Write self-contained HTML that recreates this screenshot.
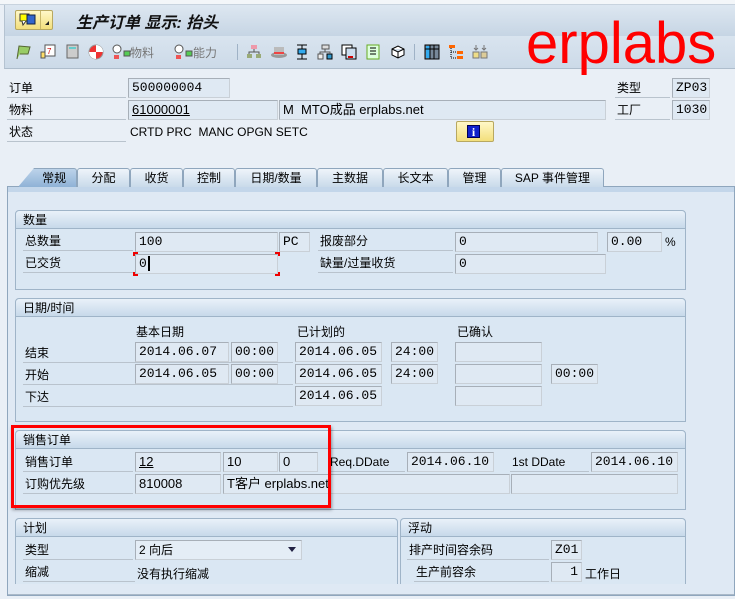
<!DOCTYPE html>
<html><head><meta charset="utf-8"><style>
*{margin:0;padding:0;box-sizing:border-box}
body{width:735px;height:599px;overflow:hidden;background:#e9eff6;font-family:"Liberation Sans","Noto Sans CJK SC",sans-serif;font-size:12px;color:#000;position:relative}
.a{position:absolute;white-space:nowrap}
.f{position:absolute;height:20px;border:1px solid #a7afb8;border-right-color:#c9d0d7;border-bottom-color:#c9d0d7;background:#dfe9f3;font-family:"Liberation Mono","Noto Sans CJK SC",monospace;font-size:13px;line-height:18px;padding-left:3px;white-space:nowrap;overflow:hidden}
.s{font-family:"Liberation Sans","Noto Sans CJK SC",sans-serif;font-size:12px}
.l{position:absolute;height:20px;line-height:20px;border-bottom:1px solid #b9c3cd;padding-left:2px;white-space:nowrap}
.g{position:absolute;border:1px solid #9fb4c8;border-radius:4px 4px 0 0;background:#dae7f3}
.gh{height:18px;background:linear-gradient(#e9f1f9,#c7d9ea);border-bottom:1px solid #9fb4c8;padding-left:7px;line-height:18px;border-radius:4px 4px 0 0}
.tab{position:absolute;top:168px;height:19px;border:1px solid #8fa6bd;border-bottom:none;border-radius:3px 3px 0 0;background:linear-gradient(#eef4fa,#c9daea);text-align:center;line-height:18px}
.ic{position:absolute;top:44px}
.rc{position:absolute;width:5px;height:4px;border-color:#e00;border-style:solid;border-width:0}
</style></head><body>
<div class="a" style="left:0;top:0;width:735px;height:5px;background:#f3f6f9;border-bottom:1px solid #c8d3de"></div>
<div class="a" style="left:4px;top:5px;width:731px;height:31px;background:linear-gradient(#dde7f1,#c6d5e4);border-left:1px solid #b5c3d1"></div>
<div class="a" style="left:15px;top:10px;width:38px;height:20px;background:linear-gradient(#fff8c8,#f3df7c);border:1px solid #b8a860;border-radius:2px"></div>
<div class="a" style="left:40px;top:11px;width:1px;height:18px;background:#c9b86a"></div>
<svg class="a" style="left:19px;top:13px" width="18" height="14"><rect x="1" y="1" width="9" height="7" fill="#ff0" stroke="#333"/><rect x="8" y="2" width="8" height="9" fill="#36c" stroke="#124"/><path d="M3 8 L4 12 L7 8" fill="#fff" stroke="#333"/></svg>
<div class="a" style="left:45px;top:21px;width:4px;height:4px;background:#222;clip-path:polygon(100% 0,100% 100%,0 100%)"></div>
<div class="a" style="left:76px;top:9px;font-size:16px;font-weight:bold;font-style:italic;color:#111">生产订单 显示: 抬头</div>
<div class="a" style="left:4px;top:36px;width:731px;height:33px;background:linear-gradient(#d9e4ef,#ccdae8);border-left:1px solid #b5c3d1;border-bottom:1px solid #aebdcc"></div>
<svg class="ic" style="left:14px" width="20" height="16"><path d="M3 15 L5 2 L16 3 L14 10 L6 10" fill="#9c6" stroke="#563"/></svg>
<svg class="ic" style="left:40px" width="16" height="16"><rect x="5" y="1" width="10" height="11" fill="#fff" stroke="#555"/><text x="7" y="10" font-size="8" fill="#c00">7</text><rect x="1" y="8" width="4" height="6" fill="#fd6" stroke="#555"/></svg>
<svg class="ic" style="left:66px" width="14" height="16"><rect x="1" y="1" width="11" height="13" fill="#ccc" stroke="#666"/><rect x="3" y="3" width="7" height="2" fill="#6cc"/></svg>
<svg class="ic" style="left:88px" width="16" height="16"><circle cx="8" cy="8" r="7" fill="#e33" stroke="#999"/><path d="M8 1 A7 7 0 0 1 15 8 L8 8Z M8 8 L8 15 A7 7 0 0 1 1 8Z" fill="#fff"/></svg>
<svg class="ic" style="left:112px" width="20" height="16"><circle cx="5" cy="5" r="4" fill="#fff" stroke="#555"/><rect x="2" y="11" width="5" height="4" fill="#e55"/><rect x="12" y="7" width="6" height="5" fill="#5c5" stroke="#555"/></svg>
<div class="a" style="left:130px;top:44px;color:#777">物料</div>
<svg class="ic" style="left:174px" width="20" height="16"><circle cx="5" cy="5" r="4" fill="#fff" stroke="#555"/><rect x="2" y="11" width="5" height="4" fill="#e55"/><rect x="12" y="7" width="6" height="5" fill="#5c5" stroke="#555"/></svg>
<div class="a" style="left:193px;top:44px;color:#777">能力</div>
<div class="a" style="left:237px;top:44px;width:1px;height:16px;background:#9fb2c6"></div>
<svg class="ic" style="left:246px" width="16" height="16"><rect x="5" y="1" width="6" height="4" fill="#e9a"/><rect x="1" y="10" width="5" height="4" fill="#9a7"/><rect x="10" y="10" width="5" height="4" fill="#9a7"/><path d="M8 5V8H3V10M8 8H13V10" stroke="#555" fill="none"/></svg>
<svg class="ic" style="left:270px" width="18" height="16"><ellipse cx="9" cy="11" rx="8" ry="3" fill="#999"/><rect x="4" y="3" width="10" height="8" fill="#bbb"/><rect x="4" y="8" width="10" height="2" fill="#e44"/></svg>
<svg class="ic" style="left:296px" width="12" height="16"><path d="M1 1H11M6 1V15M1 15H11" stroke="#000"/><rect x="2" y="5" width="8" height="5" fill="#3ae" stroke="#000"/></svg>
<svg class="ic" style="left:317px" width="16" height="16"><rect x="5" y="1" width="7" height="4" fill="#ddd" stroke="#555"/><rect x="1" y="10" width="5" height="5" fill="#eee" stroke="#555"/><rect x="10" y="10" width="5" height="5" fill="#39c" stroke="#000"/><path d="M8 5V8H3V10M8 8H13V10" stroke="#555" fill="none"/></svg>
<svg class="ic" style="left:341px" width="16" height="16"><rect x="1" y="1" width="10" height="10" fill="#fff" stroke="#000"/><rect x="5" y="4" width="10" height="11" fill="#cde" stroke="#000"/><rect x="7" y="12" width="5" height="2" fill="#c00"/></svg>
<svg class="ic" style="left:366px" width="14" height="16"><rect x="1" y="1" width="12" height="14" fill="#dfd" stroke="#6a2"/><path d="M4 4H10M4 7H10M4 10H10" stroke="#000"/></svg>
<svg class="ic" style="left:390px" width="16" height="16"><path d="M2 5L8 2L14 5V11L8 14L2 11Z M2 5L8 8L14 5M8 8V14" fill="#fff" stroke="#000"/></svg>
<div class="a" style="left:414px;top:44px;width:1px;height:16px;background:#9fb2c6"></div>
<svg class="ic" style="left:424px" width="16" height="16"><rect x="1" y="1" width="14" height="14" fill="#789" stroke="#000"/><rect x="2" y="2" width="4" height="12" fill="#3ae"/><path d="M6 1V15M10 1V15M1 5H15" stroke="#000"/></svg>
<svg class="ic" style="left:448px" width="16" height="16"><rect x="1" y="1" width="6" height="3" fill="#f60"/><rect x="9" y="7" width="6" height="3" fill="#f60"/><rect x="9" y="12" width="6" height="3" fill="#f60"/><path d="M3 4V14H9M3 8H9" stroke="#000" stroke-dasharray="1 1" fill="none"/></svg>
<svg class="ic" style="left:471px" width="18" height="16"><rect x="2" y="8" width="6" height="6" fill="#ed8" stroke="#777"/><rect x="10" y="8" width="6" height="6" fill="#dc9" stroke="#777"/><path d="M5 1V6M3 4L5 6L7 4M13 1V6M11 4L13 6L15 4" stroke="#777" fill="none"/></svg>
<div class="a" style="left:526px;top:15px;font-size:58px;color:#f00;font-family:'Liberation Sans',sans-serif;line-height:1">erplabs</div>
<div class="l" style="left:7px;top:78px;width:119px">订单</div>
<div class="f" style="left:128px;top:78px;width:102px">500000004</div>
<div class="l" style="left:7px;top:100px;width:119px">物料</div>
<div class="f s" style="left:128px;top:100px;width:150px;text-decoration:underline;font-size:13px">61000001</div>
<div class="f s" style="left:279px;top:100px;width:327px;font-size:13px">M&nbsp; MTO成品 erplabs.net</div>
<div class="l" style="left:7px;top:122px;width:119px">状态</div>
<div class="a" style="left:130px;top:125px">CRTD PRC&nbsp; MANC OPGN SETC</div>
<div class="a" style="left:456px;top:121px;width:38px;height:21px;background:linear-gradient(#fff8c8,#f3df7c);border:1px solid #b8a860;border-radius:2px"></div>
<div class="a" style="left:467px;top:125px;width:13px;height:13px;background:#12c;color:#fff;font-weight:bold;font-family:'Liberation Serif',serif;font-size:12px;text-align:center;line-height:13px;border:1px solid #005">i</div>
<div class="l" style="left:615px;top:78px;width:55px">类型</div>
<div class="f" style="left:672px;top:78px;width:38px">ZP03</div>
<div class="l" style="left:615px;top:100px;width:55px">工厂</div>
<div class="f" style="left:672px;top:100px;width:38px">1030</div>
<div class="a" style="left:7px;top:186px;width:728px;height:410px;background:#dfe9f4;border:1px solid #8fa6bd"></div>
<div class="tab" style="left:18px;width:59px;background:linear-gradient(#bcd3ea,#8fb2d6);clip-path:polygon(0 100%,16px 0,100% 0,100% 100%)">&nbsp;&nbsp;&nbsp;&nbsp;常规</div>
<div class="tab" style="left:77px;width:53px">分配</div>
<div class="tab" style="left:130px;width:53px">收货</div>
<div class="tab" style="left:183px;width:52px">控制</div>
<div class="tab" style="left:235px;width:82px">日期/数量</div>
<div class="tab" style="left:317px;width:66px">主数据</div>
<div class="tab" style="left:383px;width:65px">长文本</div>
<div class="tab" style="left:448px;width:53px">管理</div>
<div class="tab" style="left:501px;width:103px">SAP 事件管理</div>
<div class="a" style="left:8px;top:187px;width:726px;height:5px;background:#c3d6ea"></div>
<div class="g" style="left:15px;top:210px;width:671px;height:80px"><div class="gh">数量</div></div>
<div class="l" style="left:23px;top:231px;width:110px">总数量</div>
<div class="f" style="left:135px;top:232px;width:143px">100</div>
<div class="f" style="left:279px;top:232px;width:31px">PC</div>
<div class="l" style="left:318px;top:231px;width:135px">报废部分</div>
<div class="f" style="left:455px;top:232px;width:143px">0</div>
<div class="f" style="left:607px;top:232px;width:55px">0.00</div>
<div class="a" style="left:665px;top:235px">%</div>
<div class="l" style="left:23px;top:253px;width:110px">已交货</div>
<div class="f" style="left:135px;top:254px;width:143px">0<span style="border-left:2px solid #000;margin-left:1px"></span></div>
<div class="rc" style="left:133px;top:252px;border-top-width:2px;border-left-width:2px"></div>
<div class="rc" style="left:275px;top:252px;border-top-width:2px;border-right-width:2px"></div>
<div class="rc" style="left:133px;top:272px;border-bottom-width:2px;border-left-width:2px"></div>
<div class="rc" style="left:275px;top:272px;border-bottom-width:2px;border-right-width:2px"></div>
<div class="l" style="left:318px;top:253px;width:135px">缺量/过量收货</div>
<div class="f" style="left:455px;top:254px;width:151px">0</div>
<div class="g" style="left:15px;top:298px;width:671px;height:124px"><div class="gh">日期/时间</div></div>
<div class="a" style="left:136px;top:323px">基本日期</div>
<div class="a" style="left:297px;top:323px">已计划的</div>
<div class="a" style="left:457px;top:323px">已确认</div>
<div class="l" style="left:23px;top:343px;width:270px">结束</div>
<div class="l" style="left:23px;top:365px;width:270px">开始</div>
<div class="l" style="left:23px;top:387px;width:270px">下达</div>
<div class="f" style="left:135px;top:342px;width:94px">2014.06.07</div>
<div class="f" style="left:231px;top:342px;width:47px">00:00</div>
<div class="f" style="left:295px;top:342px;width:87px">2014.06.05</div>
<div class="f" style="left:391px;top:342px;width:47px">24:00</div>
<div class="f" style="left:455px;top:342px;width:87px"></div>
<div class="f" style="left:135px;top:364px;width:94px">2014.06.05</div>
<div class="f" style="left:231px;top:364px;width:47px">00:00</div>
<div class="f" style="left:295px;top:364px;width:87px">2014.06.05</div>
<div class="f" style="left:391px;top:364px;width:47px">24:00</div>
<div class="f" style="left:455px;top:364px;width:87px"></div>
<div class="f" style="left:551px;top:364px;width:47px">00:00</div>
<div class="f" style="left:295px;top:386px;width:87px">2014.06.05</div>
<div class="f" style="left:455px;top:386px;width:87px"></div>
<div class="g" style="left:15px;top:430px;width:671px;height:80px"><div class="gh">销售订单</div></div>
<div class="l" style="left:23px;top:452px;width:110px">销售订单</div>
<div class="f s" style="left:135px;top:452px;width:86px;text-decoration:underline;font-size:13px">12</div>
<div class="f s" style="left:223px;top:452px;width:55px;font-size:13px">10</div>
<div class="f s" style="left:279px;top:452px;width:39px;font-size:13px">0</div>
<div class="l" style="left:328px;top:452px;width:77px">Req.DDate</div>
<div class="f" style="left:407px;top:452px;width:87px">2014.06.10</div>
<div class="l" style="left:510px;top:452px;width:79px">1st DDate</div>
<div class="f" style="left:591px;top:452px;width:87px">2014.06.10</div>
<div class="l" style="left:23px;top:474px;width:110px">订购优先级</div>
<div class="f s" style="left:135px;top:474px;width:86px;font-size:13px">810008</div>
<div class="f s" style="left:223px;top:474px;width:110px;font-size:13px">T客户 erplabs.net</div>
<div class="f" style="left:331px;top:474px;width:179px;border-left:none"></div>
<div class="f" style="left:511px;top:474px;width:167px"></div>
<div class="a" style="left:11px;top:425px;width:320px;height:83px;border:3px solid #f00;box-shadow:1px 2px 3px rgba(0,0,0,.35)"></div>
<div class="g" style="left:15px;top:518px;width:383px;height:70px;border-bottom:none"><div class="gh">计划</div></div>
<div class="g" style="left:400px;top:518px;width:286px;height:70px;border-bottom:none"><div class="gh">浮动</div></div>
<div class="l" style="left:23px;top:540px;width:110px">类型</div>
<div class="f s" style="left:135px;top:540px;width:167px;font-size:12px;background:#e4edf6">2 向后</div>
<div class="a" style="left:288px;top:547px;width:0;height:0;border-left:4px solid transparent;border-right:4px solid transparent;border-top:5px solid #224"></div>
<div class="l" style="left:23px;top:562px;width:112px">缩减</div>
<div class="a" style="left:137px;top:565px">没有执行缩减</div>
<div class="l" style="left:407px;top:540px;width:142px">排产时间容余码</div>
<div class="f" style="left:551px;top:540px;width:31px">Z01</div>
<div class="l" style="left:414px;top:562px;width:135px">生产前容余</div>
<div class="f" style="left:551px;top:562px;width:31px;text-align:right;padding-right:3px">1</div>
<div class="a" style="left:585px;top:565px">工作日</div>
<div class="a" style="left:8px;top:584px;width:726px;height:11px;background:#dfe9f4;border-bottom:1px solid #aab9c8"></div>
</body></html>
